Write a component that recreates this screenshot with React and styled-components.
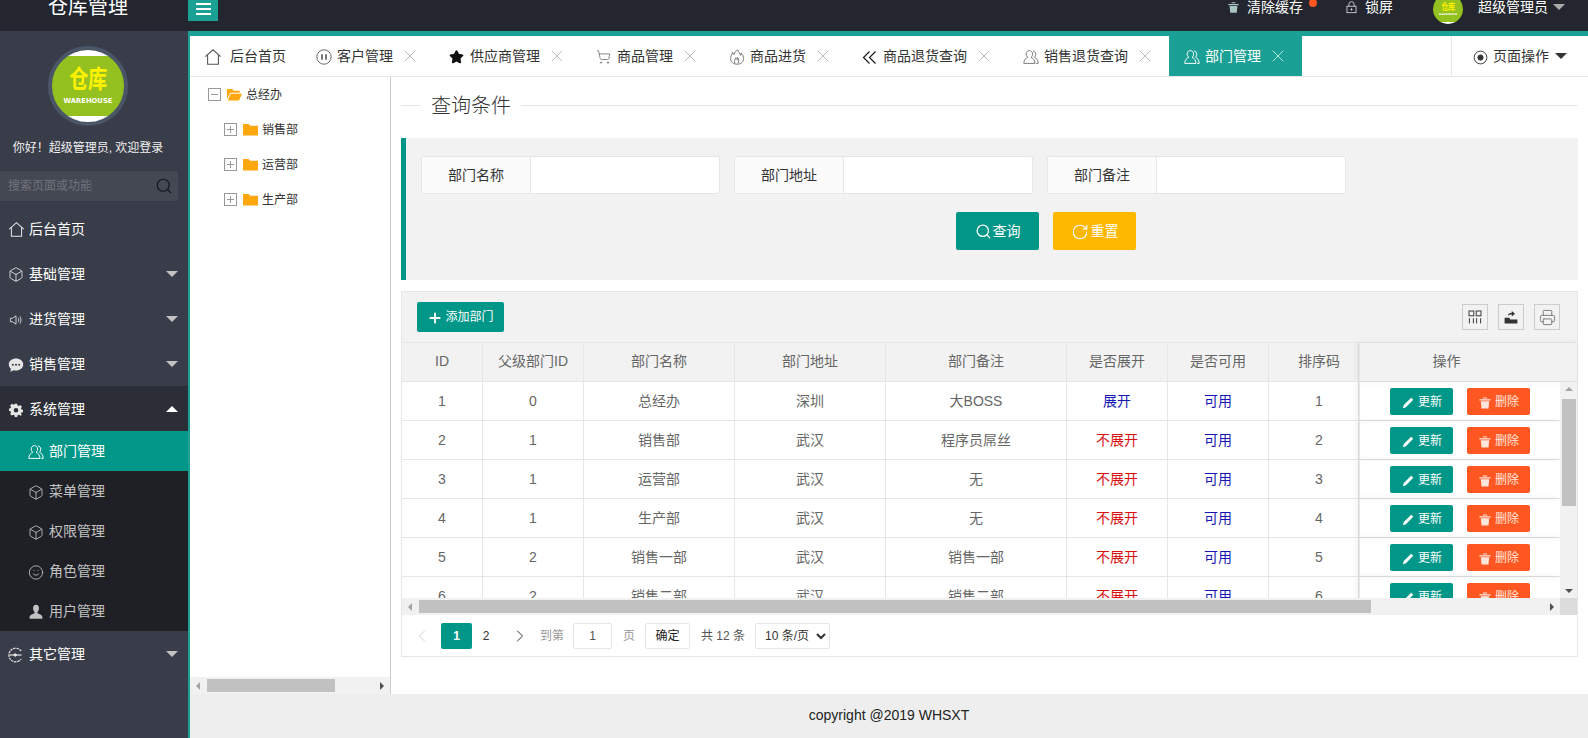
import React from 'react';
import styled, { createGlobalStyle } from 'styled-components';
import { Box, Star, ShoppingCart, Smile, Printer, Search, RotateCw, Plus, ChevronLeft, ChevronRight, X } from 'lucide-react';

const Global = createGlobalStyle`
  html, body { margin: 0; height: 738px; overflow: hidden; background: #fff; }
  body { font: 14px/1.4 "Liberation Sans", "Noto Sans CJK SC", sans-serif; color: #333; }
  * { box-sizing: border-box; }
`;

const Glyph = styled.svg`
  width: ${p => p.$s || 16}px; height: ${p => p.$s || 16}px; flex: none; display: block;
`;
const Outline = ({ s, w, children }) => <Glyph $s={s} viewBox="0 0 20 20" fill="none" stroke="currentColor" strokeWidth={w || 1.2}>{children}</Glyph>;
const Solid = ({ s, children }) => <Glyph $s={s} viewBox="0 0 20 20" fill="currentColor">{children}</Glyph>;

const HomeIcon = ({ s }) => <Outline s={s}><path d="M1.5 9.5 10 2l8.500 7.500M4 8v10h12V8" /></Outline>;
const PersonIcon = ({ s }) => <Outline s={s}><path d="M8 2c-2.500 0-4 2-4 4.500 0 1.800.8 3.100 2 4-2.500 1-5 3-5 7.500h14c0-4.500-2.500-6.500-5-7.500 1.200-.9 2-2.200 2-4C12 4 10.500 2 8 2z" /><path d="M12.500 2.400c2 .4 3.500 2 3.500 4.200 0 1.500-.6 2.800-1.600 3.700 2 1 4.600 3 4.600 7.700h-2.500" /></Outline>;
const SpeakerIcon = ({ s }) => <Outline s={s}><path d="M2 7.500h3L10 4v12l-5-3.500H2zM13 7c1.300 1.500 1.300 4.500 0 6M15.500 5c2.300 2.800 2.300 7.200 0 10" /></Outline>;
const ChatIcon = ({ s }) => <Solid s={s}><path fillRule="evenodd" d="M10 2c5 0 9 3 9 7.500S15 17 10 17c-1 0-2-.1-3-.4L3 18.500l.7-3.700C2 13.500 1 11.600 1 9.500 1 5 5 2 10 2zM6 8.300a1.300 1.300 0 1 0 0 2.600 1.300 1.300 0 0 0 0-2.600zm4 0a1.300 1.300 0 1 0 0 2.600 1.300 1.300 0 0 0 0-2.600zm4 0a1.300 1.300 0 1 0 0 2.600 1.300 1.300 0 0 0 0-2.600z" /></Solid>;
const GearIcon = ({ s }) => <Solid s={s}><path fillRule="evenodd" d="M8.300 1h3.400l.5 2.600 1.500.7L16 3l2.400 2.400-1.300 2.300.7 1.500 2.200.5v3.400l-2.200.5-.7 1.500 1.300 2.300L16 18l-2.300-1.300-1.500.7-.5 2.600H8.300l-.5-2.600-1.500-.7L4 18l-2.400-2.400 1.300-2.300-.7-1.500L0 11.300V7.900l2.200-.5.7-1.500L1.600 3.600 4 1.200l2.300 1.300 1.500-.7zM10 7a3.300 3.300 0 1 0 0 6.600A3.300 3.300 0 0 0 10 7z" /></Solid>;
const UserSolidIcon = ({ s }) => <Solid s={s}><path d="M10 1c2.400 0 3.700 1.800 3.700 4.300 0 2-.8 3.700-1.900 4.700v1.700c2.500 1 6.200 2 6.200 5.300v1.500H2v-1.500c0-3.300 3.700-4.300 6.200-5.300V10C7.100 9 6.300 7.300 6.300 5.300 6.300 2.800 7.600 1 10 1z" /></Solid>;
const OtherIcon = ({ s }) => <Outline s={s}><path strokeWidth="1.500" strokeDasharray="3 1" d="M16.500 5A8.500 8.500 0 1 0 16.500 15" /><path strokeWidth="1.500" d="M2 10h15" /><circle cx="9" cy="10" r="1.500" fill="currentColor" /></Outline>;
const TrashIcon = ({ s }) => <Solid s={s}><path d="M2 4.500h16v2H2zM7 2h6v1.500H7zM4 7.500h12L15 18H5z" /></Solid>;
const LockIcon = ({ s }) => <Outline s={s}><rect x="3" y="8" width="14" height="10" /><path d="M6 8V5a4 4 0 0 1 8 0v3" /><circle cx="10" cy="13" r="1" fill="currentColor" /></Outline>;
const PencilIcon = ({ s }) => <Solid s={s}><path d="M14.500 2.500 17.500 5.500 7 16l-4.500 1.500L4 13z" /></Solid>;
const ColsIcon = ({ s }) => <Outline s={s}><rect x="2.500" y="2.500" width="6" height="6" /><rect x="11.500" y="2.500" width="6" height="6" /><path d="M3 11.500v6.500M8 11.500v6.500M12 11.500v6.500M17 11.500v6.500" /></Outline>;
const ExportIcon = ({ s }) => <Solid s={s}><path d="M2 11h6l1 2h9v5H2zM6 8.500c.3-2.500 2.500-3.700 5-3.700V2.500L15 6l-4 3.500V7C9 7 7.500 7.500 6 8.500z" /></Solid>;
const RadioIcon = ({ s }) => <Outline s={s}><circle cx="10" cy="10" r="8.500" /><circle cx="10" cy="10" r="3.500" fill="currentColor" /></Outline>;
const PauseIcon = ({ s }) => <Outline s={s} w={1}><circle cx="10" cy="10" r="9" /><path strokeWidth="1.800" d="M7.500 6.500v7M12.500 6.500v7" /></Outline>;
const FlameIcon = ({ s }) => <Outline s={s} w={1.1}><path d="M11 1c.5 3 3 4.500 3.500 7 .6-.8.8-1.800.7-3 2 2 3 4.500 3 7 0 4-3 7-8 7s-8.200-3-8.200-7c0-3 1.500-5 2.500-8 .5 1.200 1 2.200 1.800 3C6.500 4.500 8.500 2.500 11 1z" /><path d="M7.500 18c-1.500-3 0-5 1-7 .3 1 1 2 2 2.500.3-1 .3-2 0-3 1.800 2 2.500 5 .5 7.500" /></Outline>;
const DoubleLeftIcon = ({ s }) => <Outline s={s} w={1.500}><path d="M10 2 2 10l8 8M18 2l-8 8 8 8" /></Outline>;
const FolderIcon = ({ s }) => <Glyph $s={s} viewBox="0 0 20 20" fill="#FFA70F"><path d="M0 2.500h7.500l2 2.500H20v13H0z" /></Glyph>;
const FolderOpenIcon = ({ s }) => <Glyph $s={s} viewBox="0 0 20 20" fill="#FFA70F"><path d="M0 2.500h7l2 2.500h8v2.500H4.500L0 16zM5 9h15l-4 9H1z" /></Glyph>;
const Triangle = styled.i`
  width: 0; height: 0; flex: none;
  border-left: ${p => p.$w || 6}px solid transparent;
  border-right: ${p => p.$w || 6}px solid transparent;
  ${p => p.$up ? `border-bottom: ${p.$h || 6}px solid ${p.$c};` : `border-top: ${p.$h || 6}px solid ${p.$c};`}
`;
const Slot = styled.span`
  width: ${p => p.$w || 16}px; flex: none; display: flex; justify-content: center; align-items: center;
  margin-right: ${p => p.$mr || 0}px; color: ${p => p.$c || 'inherit'};
`;

const Page = styled.div`
  width: 1588px; height: 738px; display: flex; flex-direction: column; overflow: hidden;
`;
const Header = styled.header`
  height: 31px; flex: none; background: #23262E; display: flex; align-items: flex-start; overflow: hidden; color: #fff;
`;
const Title = styled.div`
  width: 188px; padding-left: 48px; font-size: 20px; line-height: 14px; white-space: nowrap;
`;
const Hamburger = styled.div`
  width: 30px; height: 21px; background: #1AA094; display: flex; flex-direction: column; align-items: center; justify-content: center; gap: 3px; padding-bottom: 4px;
  i { display: block; width: 15px; height: 2px; background: #fff; }
`;
const HeaderNav = styled.nav`
  margin-left: auto; display: flex; align-items: flex-start; font-size: 14px; line-height: 14px; color: #e8e8e8; padding-right: 23px;
`;
const HeaderItem = styled.div`
  display: flex; align-items: center; gap: ${p => p.$gap || 7}px; margin-left: ${p => p.$ml || 0}px; position: relative; color: #fff;
  svg { color: ${p => p.$ic || '#a9c4be'}; }
`;
const Dot = styled.i`
  width: 8px; height: 8px; border-radius: 50%; background: #FF5722; position: absolute; right: -14px; top: -1px;
`;
const HeaderUser = styled.div`
  display: flex; align-items: flex-start; gap: 15px; margin-left: 40px; margin-top: -6px;
`;
const HeaderUserName = styled.div`
  display: flex; align-items: center; gap: 5px; margin-top: 6px; color: #fff;
`;

const LogoDisc = styled.div`
  width: ${p => p.$size}px; height: ${p => p.$size}px; border-radius: 50%; flex: none; overflow: hidden;
  background: linear-gradient(#fff 0 8%, #94C11F 8% 92%, #fff 92%);
  display: flex; flex-direction: column; align-items: center; justify-content: center;
  ${p => p.$ring ? 'border: 4px solid #4A5668; box-sizing: border-box;' : ''}
`;
const LogoMain = styled.span`
  color: #FFF200; font-weight: 700; font-size: ${p => p.$size * 0.24}px; line-height: 1.35; letter-spacing: -0.5px;
  transform: scaleY(1.3); transform-origin: center;
`;
const LogoSub = styled.span`
  color: #fff; font-weight: 700; font-size: ${p => p.$size * 0.085}px; line-height: 1.3; margin-top: ${p => p.$size * 0.05}px;
  font-family: "DejaVu Sans", sans-serif; white-space: nowrap;
`;
const Logo = ({ size, ring }) => (
  <LogoDisc $size={size} $ring={ring}>
    <LogoMain $size={size}>仓库</LogoMain>
    <LogoSub $size={size}>WAREHOUSE</LogoSub>
  </LogoDisc>
);

const Body = styled.div`
  flex: 1; display: flex; min-height: 0;
`;
const Sidebar = styled.aside`
  width: 190px; flex: none; background: #393D49; border-right: 2px solid #1AA094; padding-top: 15px; color: #fff;
`;
const AvatarRow = styled.div`
  display: flex; justify-content: center; padding-right: 12px; margin-bottom: 14px;
`;
const Hello = styled.div`
  font-size: 12px; line-height: 17px; text-align: center; padding-right: 12px; color: #f0f0f0; white-space: nowrap;
`;
const SearchBox = styled.div`
  width: 178px; height: 30px; margin-top: 14px; margin-bottom: 5px; background: #444853; border-radius: 0 2px 2px 0;
  display: flex; align-items: center; justify-content: space-between; padding: 0 5px 0 8px;
  font-size: 12px; color: #70747c;
  svg { color: #16181c; }
`;
const Menu = styled.div`
  display: flex; flex-direction: column;
`;
const MenuRow = styled.div`
  height: 45px; display: flex; align-items: center; gap: 5px; padding: 2px 10px 0 8px;
  background: ${p => p.$open ? '#2B2E37' : 'transparent'}; color: #fff;
  svg { color: #e6e6e6; }
  i { margin-left: auto; margin-top: -2px; }
`;
const SubMenu = styled.div`
  background: #1F2026;
`;
const SubRow = styled.div`
  height: 40px; display: flex; align-items: center; gap: 5px; padding: 2px 0 0 28px;
  background: ${p => p.$active ? '#009688' : 'transparent'}; color: ${p => p.$active ? '#fff' : '#c2c2c2'};
`;

const Main = styled.main`
  flex: 1; min-width: 0; display: flex; flex-direction: column;
`;
const TabBar = styled.div`
  height: 46px; flex: none; border-top: 5px solid #1AA094; border-bottom: 1px solid #e6e6e6; display: flex; background: #fff;
`;
const Tab = styled.div`
  display: flex; align-items: center; height: 40px; padding: 2px ${p => p.$home ? 15 : 19}px 0 15px; white-space: nowrap;
  background: ${p => p.$active ? '#1AA094' : '#fff'}; color: ${p => p.$active ? '#fff' : '#333'};
`;
const TabClose = styled.span`
  display: flex; width: 11px; justify-content: center; align-items: center; margin: -2px 0 0 11px;
  color: ${p => p.$active ? '#c8ece7' : '#b5b5b5'};
  svg { flex: none; }
`;
const PageOps = styled.div`
  margin-left: auto; width: 137px; height: 40px; border-left: 1px solid #e6e6e6; display: flex; align-items: center; padding: 2px 0 0 21px; gap: 5px;
  i { margin-left: 1px; margin-top: -2px; }
`;
const Workspace = styled.div`
  flex: 1; min-height: 0; display: flex;
`;
const TreePane = styled.div`
  width: 201px; flex: none; border-right: 1px solid #ccc; display: flex; flex-direction: column; justify-content: space-between;
`;
const TreeList = styled.div`
  padding-top: 0;
`;
const TreeRow = styled.div`
  height: 35px; display: flex; align-items: center; padding-left: ${p => p.$child ? 34 : 18}px; font-size: 12px; color: #333;
  margin-top: ${p => p.$first ? '1px' : 0};
  svg { margin-top: -3px; margin-right: 4px; }
`;
const Toggle = styled.span`
  width: 13px; height: 13px; border: 1px solid #999; flex: none; margin-right: 6px; margin-top: -3px; position: relative;
  &::before { content: ''; position: absolute; left: 2px; right: 2px; top: 5px; height: 1px; background: #999; }
  ${p => p.$plus ? `&::after { content: ''; position: absolute; top: 2px; bottom: 2px; left: 5px; width: 1px; background: #999; }` : ''}
`;
const ScrollH = styled.div`
  height: 17px; flex: none; background: #f1f1f1; display: flex; align-items: center; padding: 0 ${p => p.$pad ?? 6}px; position: relative;
`;
const ScrollThumb = styled.div`
  position: absolute; top: 2px; bottom: 2px; left: ${p => p.$l}px; width: ${p => p.$w}px; background: #c1c1c1;
`;
const ArrowH = styled.i`
  width: 0; height: 0; border-top: 4px solid transparent; border-bottom: 4px solid transparent;
  ${p => p.$right ? `border-left: 4px solid #505050; margin-left: auto;` : `border-right: 4px solid #a3a3a3;`}
`;

const Content = styled.div`
  flex: 1; min-width: 0; padding: 18px 10px 0;
`;
const Legend = styled.div`
  display: flex; align-items: center; height: 20px; margin-bottom: 23px; font-size: 20px; font-weight: 300; color: #333;
  &::before { content: ''; width: 20px; height: 1px; background: #e6e6e6; margin-right: 10px; }
  &::after { content: ''; flex: 1; height: 1px; background: #e6e6e6; margin-left: 10px; }
`;
const LegendText = styled.span`
  position: relative; top: 1px;
`;
const QueryBox = styled.div`
  height: 142px; background: #f2f2f2; border-left: 5px solid #009688; padding: 18px 15px;
`;
const FieldRow = styled.div`
  display: flex; gap: 14px;
`;
const Field = styled.div`
  display: flex; height: 38px; width: 299px; border: 1px solid #e6e6e6; background: #fff; border-radius: 2px;
`;
const FieldLabel = styled.div`
  width: 109px; background: #fbfbfb; border-right: 1px solid #e6e6e6; text-align: center; line-height: 36px; color: #333;
`;
const QueryActions = styled.div`
  display: flex; gap: 14px; margin-top: 18px; padding-left: 535px;
`;
const Btn = styled.div`
  display: inline-flex; align-items: center; justify-content: center; gap: ${p => p.$gap ?? 3}px; flex: none; color: ${p => p.$fg || '#fff'}; border-radius: 2px;
  background: ${p => p.$c || '#009688'}; width: ${p => p.$w}px; height: ${p => p.$h}px; font-size: ${p => p.$fs || 14}px; padding-top: ${p => p.$pt ?? 1}px;
`;
const TableBox = styled.section`
  margin-top: 11px; border: 1px solid #e6e6e6; height: 366px;
`;
const TableTools = styled.div`
  height: 51px; background: #f2f2f2; border-bottom: 1px solid #e6e6e6; display: flex; align-items: center; justify-content: space-between; padding: 0 17px 0 15px;
`;
const ToolGroup = styled.div`
  display: flex; gap: 10px;
`;
const ToolBtn = styled.div`
  width: 26px; height: 26px; border: 1px solid #ccc; display: flex; align-items: center; justify-content: center; color: #${p => p.$c || '333'};
`;
const GridRow = styled.div`
  display: grid; grid-template-columns: 81px 101px 151px 151px 181px 101px 101px 90px 1fr;
  height: ${p => p.$h}px; background: ${p => p.$head ? '#f2f2f2' : '#fff'}; border-bottom: 1px solid #e6e6e6; color: #666;
`;
const Cell = styled.div`
  display: flex; align-items: center; justify-content: center; border-right: 1px solid #e6e6e6; white-space: nowrap;
  color: ${p => p.$c || 'inherit'}; padding-left: ${p => p.$pl || 0}px;
`;
const BodyCell = styled(Cell)`
  padding-top: 2px;
`;
const FixedHead = styled(Cell)`
  border-right: 0; padding-right: 44px; box-shadow: -2px 0 6px rgba(0,0,0,.07); border-left: 1px solid #e6e6e6; position: relative;
`;
const FixedCell = styled(Cell)`
  border-right: 0; gap: 14px; box-shadow: -2px 0 6px rgba(0,0,0,.07); border-left: 1px solid #e6e6e6; position: relative;
`;
const TableBody = styled.div`
  display: flex; height: 216px;
`;
const Rows = styled.div`
  flex: 1; min-width: 0; overflow: hidden;
`;
const ScrollV = styled.div`
  width: 17px; flex: none; background: #f1f1f1; position: relative; display: flex; flex-direction: column; justify-content: space-between; align-items: center; padding: 5px 0;
  &::before { content: ''; position: absolute; left: 2px; right: 1px; top: 17px; height: 107px; background: #c1c1c1; }
`;
const HBarRow = styled.div`
  display: flex;
`;
const Corner = styled.div`
  width: 17px; flex: none; background: #dcdcdc;
`;
const HBar = styled(ScrollH)`
  flex: 1;
`;
const Pager = styled.div`
  display: flex; align-items: center; height: 42px; padding: 0 0 0 10px; color: #999; font-size: 12px;
`;
const PagerNum = styled.div`
  width: ${p => p.$w}px; height: 26px; display: flex; align-items: center; justify-content: center; border-radius: 2px; font-size: 12px;
  background: ${p => p.$on ? '#009688' : 'transparent'}; color: ${p => p.$on ? '#fff' : '#333'}; font-weight: ${p => p.$on ? 700 : 400};
`;
const PagerArrow = styled.span`
  display: flex; color: ${p => p.$c}; margin: ${p => p.$m};
`;
const PagerInput = styled.div`
  width: 39px; height: 26px; border: 1px solid #e6e6e6; border-radius: 2px; display: flex; align-items: center; justify-content: center; margin: 0 11px 0 9px; color: #555; font-size: 12px;
`;
const PagerOk = styled.div`
  width: 45px; height: 26px; border: 1px solid #e6e6e6; border-radius: 2px; display: flex; align-items: center; justify-content: center; margin-left: 10px; color: #222; font-size: 12px;
`;
const PagerTotal = styled.span`
  color: #555; margin-left: 11px; font-size: 12px; white-space: nowrap;
`;
const PagerSelect = styled.select`
  width: 75px; height: 26px; margin-left: 10px; border: 1px solid #e6e6e6; border-radius: 2px; background: #fff; color: #333; font: 12px "Liberation Sans", "Noto Sans CJK SC", sans-serif; padding: 0 0 0 5px;
`;
const Footer = styled.footer`
  height: 44px; flex: none; background: #eee; display: flex; align-items: center; justify-content: center; color: #222; font-size: 14px;
`;

const tabs = [
  { icon: <HomeIcon s={18} />, t: '后台首页', home: true, c: '#555' },
  { icon: <PauseIcon s={16} />, t: '客户管理', c: '#444' },
  { icon: <Star size={16} fill="#111" />, t: '供应商管理', c: '#111' },
  { icon: <ShoppingCart size={18} strokeWidth={1.2} />, t: '商品管理', c: '#666' },
  { icon: <FlameIcon s={16} />, t: '商品进货', c: '#666' },
  { icon: <DoubleLeftIcon s={15} />, t: '商品退货查询', c: '#111' },
  { icon: <PersonIcon s={16} />, t: '销售退货查询', c: '#777' },
  { icon: <PersonIcon s={16} />, t: '部门管理', active: true, c: '#fff' },
];
const cols = ['ID', '父级部门ID', '部门名称', '部门地址', '部门备注', '是否展开', '是否可用'];
const rows = [
  [1, 0, '总经办', '深圳', '大BOSS', true],
  [2, 1, '销售部', '武汉', '程序员屌丝', false],
  [3, 1, '运营部', '武汉', '无', false],
  [4, 1, '生产部', '武汉', '无', false],
  [5, 2, '销售一部', '武汉', '销售一部', false],
  [6, 2, '销售二部', '武汉', '销售二部', false],
];

export default function App() {
  return (
    <Page>
      <Global />
      <Header>
        <Title>仓库管理</Title>
        <Hamburger><i /><i /><i /></Hamburger>
        <HeaderNav>
          <HeaderItem><TrashIcon s={13} />清除缓存<Dot /></HeaderItem>
          <HeaderItem $ml={42} $ic="#e8e8e8"><LockIcon s={13} />锁屏</HeaderItem>
          <HeaderUser>
            <Logo size={30} />
            <HeaderUserName>超级管理员<Triangle $c="#aaa" /></HeaderUserName>
          </HeaderUser>
        </HeaderNav>
      </Header>
      <Body>
        <Sidebar>
          <AvatarRow><Logo size={80} ring /></AvatarRow>
          <Hello>你好！超级管理员, 欢迎登录</Hello>
          <SearchBox>搜索页面或功能<Search size={18} strokeWidth={1.6} /></SearchBox>
          <Menu>
            <MenuRow><Slot><HomeIcon s={17} /></Slot>后台首页</MenuRow>
            <MenuRow><Slot><Box size={19} strokeWidth={1.3} /></Slot>基础管理<Triangle $c="#c2c2c2" /></MenuRow>
            <MenuRow><Slot><SpeakerIcon s={14} /></Slot>进货管理<Triangle $c="#c2c2c2" /></MenuRow>
            <MenuRow><Slot><ChatIcon s={16} /></Slot>销售管理<Triangle $c="#c2c2c2" /></MenuRow>
            <MenuRow $open><Slot><GearIcon s={14} /></Slot>系统管理<Triangle $c="#fff" $up /></MenuRow>
            <SubMenu>
              <SubRow $active><Slot><PersonIcon s={16} /></Slot>部门管理</SubRow>
              <SubRow><Slot><Box size={19} strokeWidth={1.3} /></Slot>菜单管理</SubRow>
              <SubRow><Slot><Box size={19} strokeWidth={1.3} /></Slot>权限管理</SubRow>
              <SubRow><Slot><Smile size={19} strokeWidth={1.3} /></Slot>角色管理</SubRow>
              <SubRow><Slot><UserSolidIcon s={16} /></Slot>用户管理</SubRow>
            </SubMenu>
            <MenuRow><Slot><OtherIcon s={16} /></Slot>其它管理<Triangle $c="#c2c2c2" /></MenuRow>
          </Menu>
        </Sidebar>
        <Main>
          <TabBar>
            {tabs.map(t => (
              <Tab key={t.t} $active={t.active} $home={t.home}>
                <Slot $w={15} $mr={t.home ? 10 : 6} $c={t.c}>{t.icon}</Slot>{t.t}
                {!t.home && <TabClose $active={t.active}><X size={20} strokeWidth={1.1} /></TabClose>}
              </Tab>
            ))}
            <PageOps><RadioIcon s={15} />页面操作<Triangle $c="#333" /></PageOps>
          </TabBar>
          <Workspace>
            <TreePane>
              <TreeList>
                <TreeRow $first><Toggle /><FolderOpenIcon s={15} />总经办</TreeRow>
                <TreeRow $child><Toggle $plus /><FolderIcon s={15} />销售部</TreeRow>
                <TreeRow $child><Toggle $plus /><FolderIcon s={15} />运营部</TreeRow>
                <TreeRow $child><Toggle $plus /><FolderIcon s={15} />生产部</TreeRow>
              </TreeList>
              <ScrollH>
                <ArrowH /><ScrollThumb $l={17} $w={128} /><ArrowH $right />
              </ScrollH>
            </TreePane>
            <Content>
              <Legend><LegendText>查询条件</LegendText></Legend>
              <QueryBox>
                <FieldRow>
                  {['部门名称', '部门地址', '部门备注'].map(l => (
                    <Field key={l}><FieldLabel>{l}</FieldLabel></Field>
                  ))}
                </FieldRow>
                <QueryActions>
                  <Btn $w={83} $h={38} $gap={1}><Search size={17} strokeWidth={1.8} />查询</Btn>
                  <Btn $w={83} $h={38} $c="#FFB800" $gap={2}><RotateCw size={18} strokeWidth={1.5} />重置</Btn>
                </QueryActions>
              </QueryBox>
              <TableBox>
                <TableTools>
                  <Btn $w={87} $h={30} $fs={12} $gap={2}><Plus size={16} strokeWidth={2.8} />添加部门</Btn>
                  <ToolGroup>
                    <ToolBtn><ColsIcon s={16} /></ToolBtn>
                    <ToolBtn><ExportIcon s={16} /></ToolBtn>
                    <ToolBtn $c="777"><Printer size={17} strokeWidth={1.3} /></ToolBtn>
                  </ToolGroup>
                </TableTools>
                <GridRow $head $h={39}>
                  {cols.map(c => <Cell key={c}>{c}</Cell>)}
                  <Cell $pl={11}>排序码</Cell>
                  <FixedHead>操作</FixedHead>
                </GridRow>
                <TableBody>
                  <Rows>
                    {rows.map(r => (
                      <GridRow key={r[0]} $h={39}>
                        <BodyCell>{r[0]}</BodyCell>
                        <BodyCell>{r[1]}</BodyCell>
                        <BodyCell>{r[2]}</BodyCell>
                        <BodyCell>{r[3]}</BodyCell>
                        <BodyCell>{r[4]}</BodyCell>
                        <BodyCell $c={r[5] ? '#1515b5' : '#d81010'}>{r[5] ? '展开' : '不展开'}</BodyCell>
                        <BodyCell $c="#1515b5">可用</BodyCell>
                        <BodyCell $pl={11}>{r[0]}</BodyCell>
                        <FixedCell>
                          <Btn $w={63} $h={27} $fs={12} $pt={3}><PencilIcon s={14} />更新</Btn>
                          <Btn $w={63} $h={27} $fs={12} $pt={3} $c="#FF5722" $fg="#ffe6dd"><TrashIcon s={14} />删除</Btn>
                        </FixedCell>
                      </GridRow>
                    ))}
                  </Rows>
                  <ScrollV>
                    <Triangle $w={4} $h={4} $c="#a3a3a3" $up />
                    <Triangle $w={4} $h={4} $c="#505050" />
                  </ScrollV>
                </TableBody>
                <HBarRow>
                  <HBar>
                    <ArrowH /><ScrollThumb $l={17} $w={952} /><ArrowH $right />
                  </HBar>
                  <Corner />
                </HBarRow>
                <Pager>
                  <PagerArrow $c="#d2d2d2" $m="0 9px 0 0"><ChevronLeft size={20} strokeWidth={1.2} /></PagerArrow>
                  <PagerNum $on $w={31}>1</PagerNum>
                  <PagerNum $w={28}>2</PagerNum>
                  <PagerArrow $c="#333" $m="0 10px 0 10px"><ChevronRight size={20} strokeWidth={1.2} /></PagerArrow>
                  到第
                  <PagerInput>1</PagerInput>
                  页
                  <PagerOk>确定</PagerOk>
                  <PagerTotal>共 12 条</PagerTotal>
                  <PagerSelect defaultValue="10"><option value="10">10 条/页</option></PagerSelect>
                </Pager>
              </TableBox>
            </Content>
          </Workspace>
          <Footer>copyright @2019 WHSXT</Footer>
        </Main>
      </Body>
    </Page>
  );
}
